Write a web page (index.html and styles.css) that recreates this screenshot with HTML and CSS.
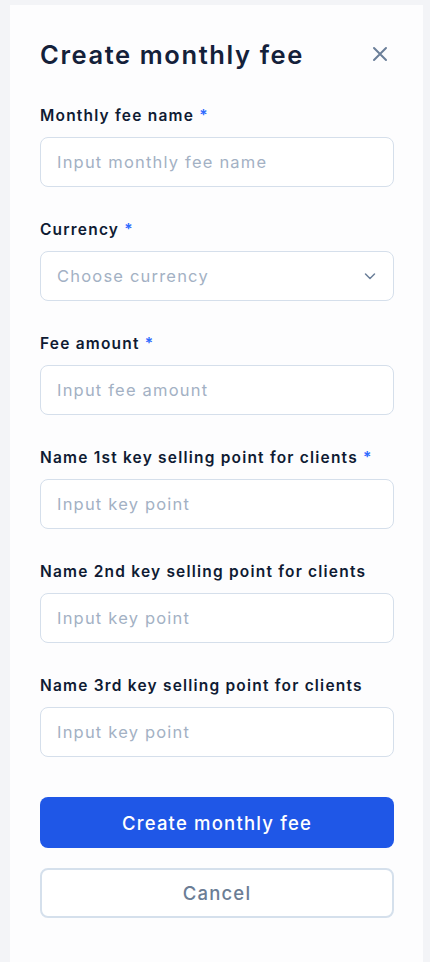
FILE: index.html
```html
<!DOCTYPE html>
<html lang="en">
<head>
    <meta charset="UTF-8">
    <meta name="viewport" content="width=device-width, initial-scale=1.0">
    <title>Create monthly fee</title>
    <link rel="stylesheet" href="styles.css">
</head>
<body>
    <div class="modal">
        <div class="modal-header">
            <h2 class="modal-title">Create monthly fee</h2>
            <button class="close-btn" aria-label="Close">
                <svg width="16" height="16" viewBox="0 0 16 16"><path d="M2 2L14 14M14 2L2 14" stroke="#6b7f99" stroke-width="2" stroke-linecap="round"/></svg>
            </button>
        </div>

        <form class="fee-form">
            <div class="field">
                <label class="field-label">Monthly fee name <span class="req">*</span></label>
                <input class="field-input" type="text" placeholder="Input monthly fee name">
            </div>
            <div class="field">
                <label class="field-label">Currency <span class="req">*</span></label>
                <div class="select">
                    <span class="select-text">Choose currency</span>
                    <svg width="14" height="14" viewBox="0 0 14 14"><path d="M2.5 5L7 9.5L11.5 5" fill="none" stroke="#6b7f99" stroke-width="1.5" stroke-linecap="round" stroke-linejoin="round"/></svg>
                </div>
            </div>
            <div class="field">
                <label class="field-label">Fee amount <span class="req">*</span></label>
                <input class="field-input" type="text" placeholder="Input fee amount">
            </div>
            <div class="field">
                <label class="field-label">Name 1st key selling point for clients <span class="req">*</span></label>
                <input class="field-input" type="text" placeholder="Input key point">
            </div>
            <div class="field">
                <label class="field-label">Name 2nd key selling point for clients</label>
                <input class="field-input" type="text" placeholder="Input key point">
            </div>
            <div class="field">
                <label class="field-label">Name 3rd key selling point for clients</label>
                <input class="field-input" type="text" placeholder="Input key point">
            </div>

            <div class="actions">
                <button type="button" class="btn btn-primary">Create monthly fee</button>
                <button type="button" class="btn btn-secondary">Cancel</button>
            </div>
        </form>
    </div>
</body>
</html>
```

FILE: styles.css
```css
body {
    margin: 0;
    padding: 5px 7px 0 10px;
    background-color: #f3f4f7;
    font-family: Inter, "Open Sans", sans-serif;
}

.modal {
    background-color: #fdfdfe;
    min-height: 957px;
    padding: 0 29px 0 30px;
    box-sizing: border-box;
}

.modal-header {
    display: flex;
    justify-content: space-between;
    align-items: center;
    padding-top: 30px;
    height: 38px;
}

.modal-title {
    margin: 0;
    font-size: 25.5px;
    font-weight: 600;
    color: #14213a;
    letter-spacing: 1.6px;
}

.close-btn {
    background: none;
    border: none;
    padding: 0;
    margin-right: 6px;
    display: flex;
    cursor: pointer;
}

.fee-form {
    margin-top: 33px;
}

.field {
    display: flex;
    flex-direction: column;
    margin-bottom: 33px;
}

.field-label {
    font-size: 15.5px;
    font-weight: 600;
    color: #0f1b33;
    line-height: 20px;
    letter-spacing: 1.2px;
    margin-bottom: 11px;
}

.req {
    color: #2f6bff;
}

.field-input,
.select {
    height: 50px;
    box-sizing: border-box;
    border: 1px solid #d5dfeb;
    border-radius: 8px;
    background: #fff;
    padding: 0 16px;
    font-family: inherit;
    font-size: 16.5px;
    letter-spacing: 1.2px;
    color: #0f1b33;
}

.field-input::placeholder {
    color: #a3b1c4;
}

.select {
    display: flex;
    align-items: center;
    justify-content: space-between;
}

.select-text {
    color: #a3b1c4;
}

.actions {
    display: flex;
    flex-direction: column;
    gap: 20px;
    margin-top: 40px;
}

.btn {
    height: 51px;
    border-radius: 8px;
    font-family: inherit;
    font-size: 18.5px;
    font-weight: 500;
    letter-spacing: 1.2px;
    cursor: pointer;
}

.btn-primary {
    background-color: #1f57e7;
    color: #fff;
    border: none;
}

.btn-secondary {
    background-color: #fff;
    color: #6b7d95;
    border: 2px solid #d5e0ec;
    height: 50px;
}
```
